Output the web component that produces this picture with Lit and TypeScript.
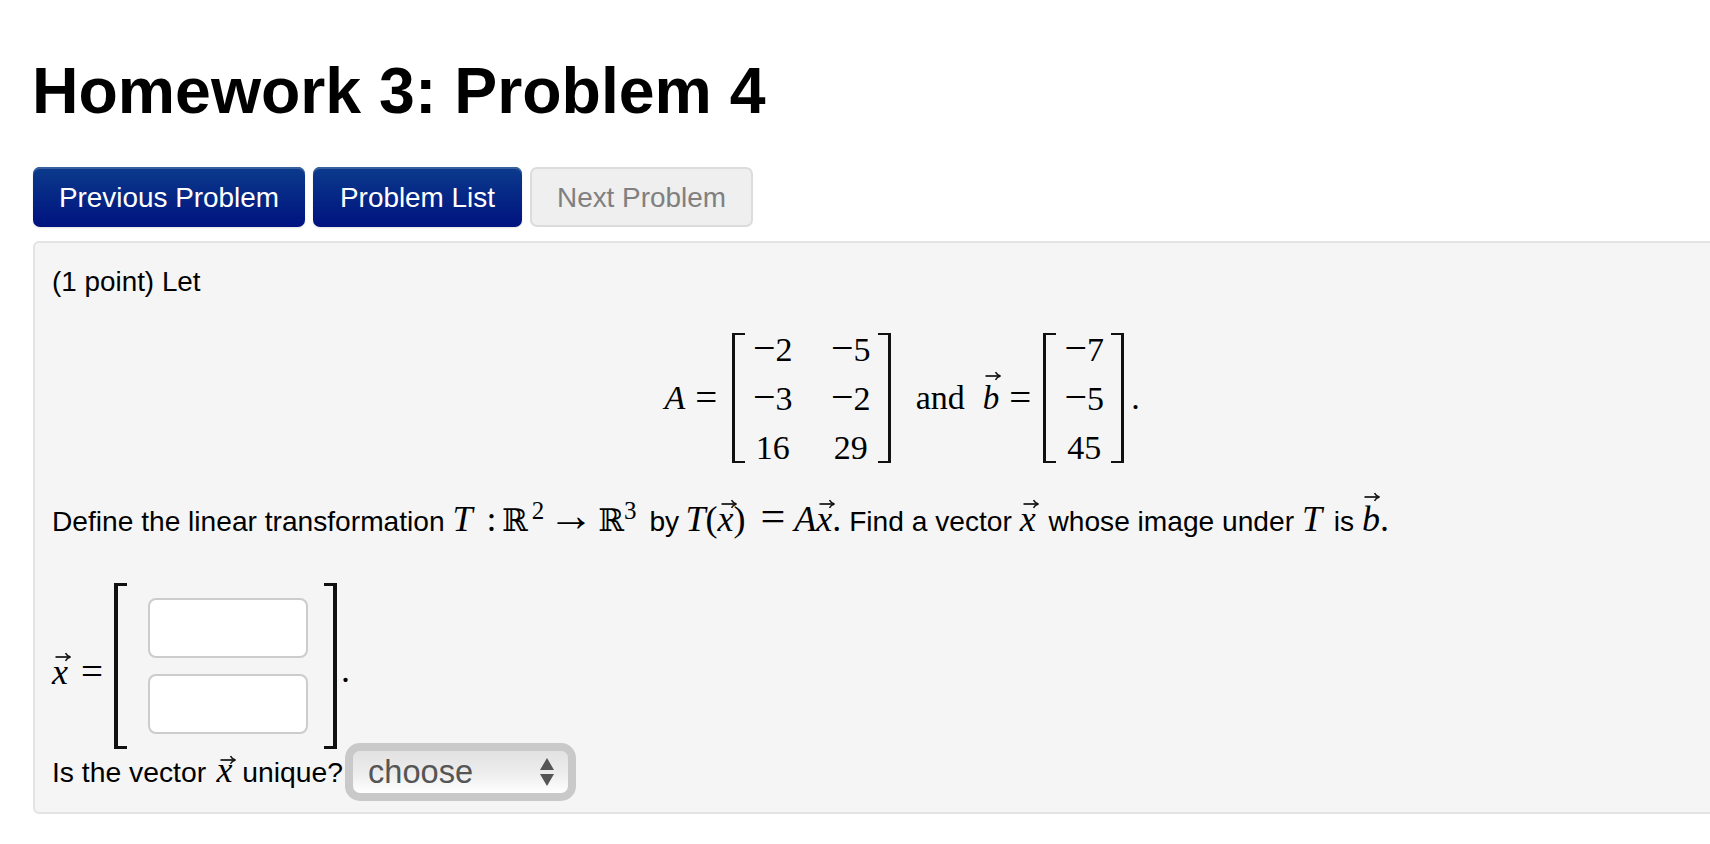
import { LitElement, html, css, svg } from "lit";
import { customElement } from "lit/decorators.js";

const arrow = html`<svg class="arrow" viewBox="0 0 16 10" aria-hidden="true">${svg`<path d="M0.5 5H14.5" stroke="#111" stroke-width="1.7" fill="none"/><path d="M10.5 1.2C11.4 3 13 4.4 15.5 5C13 5.6 11.4 7 10.5 8.8" stroke="#111" stroke-width="1.5" fill="none"/>`}</svg>`;

const vec = (letter: string) => html`<span class="vec ${letter}"><i>${letter}</i>${arrow}</span>`;

const cell = (c: string) =>
  c.startsWith("−")
    ? html`<span class="cell"><span class="minus">−</span>${c.slice(1)}</span>`
    : html`<span class="cell">${c}</span>`;

const matrix = (cols: number, cells: string[]) => html`<span class="matrix">
  <span class="br left"></span>
  <span class="cells" style="grid-template-columns: repeat(${cols}, 40px)">${cells.map(cell)}</span>
  <span class="br right"></span>
</span>`;

@customElement("app-root")
export class AppRoot extends LitElement {
  static styles = css`
    :host {
      display: block;
      width: 1710px;
      height: 844px;
      overflow: hidden;
      background: #fff;
      color: #000;
      font-family: "Liberation Sans", Arial, sans-serif;
      font-size: 27.7px;
      box-sizing: border-box;
      padding: 55px 0 0 33px;
    }
    h1 {
      margin: 0 0 40px -1px;
      font-size: 64.4px;
      line-height: 72px;
      font-weight: 700;
    }
    .nav {
      display: flex;
      gap: 8px;
      height: 60px;
      margin-bottom: 14px;
      font-size: 27.9px;
    }
    .btn {
      display: flex;
      align-items: center;
      justify-content: center;
      box-sizing: border-box;
      height: 60px;
      padding-top: 1px;
      border-radius: 7px;
      color: #fff;
      background: linear-gradient(#0b3b8c, #00127f);
      box-shadow: inset 0 2px 0 #3a5f9f, 0 1px 2px rgba(0, 0, 0, 0.12);
    }
    .prev { width: 272px; }
    .list { width: 209px; }
    .next {
      width: 223px;
      color: #808080;
      background: #efefef;
      border: 2px solid #dcdcdc;
      box-shadow: none;
    }
    .panel {
      box-sizing: border-box;
      width: 1734px;
      height: 573px;
      padding: 19px 17px 0;
      background: #f5f5f5;
      border: 2px solid #e3e3e3;
      border-radius: 6px;
    }
    .line { line-height: 40px; font-size: 27.85px; }
    .display {
      display: flex;
      align-items: center;
      justify-content: center;
      height: 130px;
      margin-top: 31px;
      padding-left: 4.4px;
      font-family: "Liberation Serif", "Times New Roman", serif;
      font-size: 34px;
    }
    .display .vec { font-size: 33px; }
    .eq { margin: 0 12px 0 10px; font-size: 39px; line-height: 0; }
    .display .eq.first { margin-right: 14.4px; }
    .and { margin: 0 18px 0 25px; }
    .dot { margin-left: 7px; }
    i { font-style: italic; }
    .matrix {
      display: flex;
      align-items: center;
      height: 130px;
    }
    .br {
      box-sizing: border-box;
      width: 13px;
      align-self: stretch;
      border-top: 2px solid #111;
      border-bottom: 2px solid #111;
    }
    .br.left { border-left: 3px solid #111; }
    .br.right { border-right: 3px solid #111; }
    .cells {
      display: grid;
      column-gap: 38px;
      margin: 0 7px 0 8px;
    }
    .cell {
      line-height: 49px;
      text-align: center;
      white-space: nowrap;
    }
    .minus { font-size: 40px; line-height: 0; }
    .define { margin-top: 39px; font-size: 28.15px; white-space: pre; }
    .m, .t, .bb, sup {
      line-height: 0;
    }
    .m {
      font-family: "Liberation Serif", "Times New Roman", serif;
      font-size: 36px;
    }
    .big { font-size: 44px; margin: 0 9px 0 15px; }
    .t {
      font-family: "Liberation Serif", "Times New Roman", serif;
      font-size: 36px;
      font-style: italic;
    }
    .t.wide { margin-right: 4px; }
    .bb {
      font-family: "DejaVu Serif", serif;
      font-size: 31px;
    }
    sup {
      font-family: "Liberation Serif", serif;
      font-size: 25px;
      vertical-align: 12px;
    }
    .sq { margin-left: 4px; }
    .colon { margin: 0 5.6px 0 14px; }
    .to { margin: 0 4px; font-size: 46px; }
    .by { margin: 0 -1.5px 0 5px; }
    .gap { margin-right: 5px; }
    .vec {
      position: relative;
      display: inline-block;
      font-family: "Liberation Serif", "Times New Roman", serif;
      font-size: 36px;
      line-height: 0;
    }
    .arrow {
      position: absolute;
      left: 3px;
      top: -20px;
      width: 16px;
      height: 10px;
    }
    .vec.b .arrow { top: -27px; left: 2px; }
    .answer {
      display: flex;
      align-items: center;
      height: 166px;
      margin-top: 41px;
      font-family: "Liberation Serif", serif;
      font-size: 36px;
    }
    .answer .vec, .answer .eq { margin-top: 12px; }
    .answer .eq { margin-left: 13px; margin-right: 11px; }
    .answer .matrix { height: 166px; }
    .answer .br { border-top-width: 3px; border-bottom-width: 3px; }
    .answer .br.left { border-left-width: 4px; }
    .answer .br.right { border-right-width: 4px; }
    .inputs {
      display: flex;
      flex-direction: column;
      gap: 16px;
      margin: 0 16px 0 21px;
    }
    .input {
      box-sizing: border-box;
      width: 160px;
      height: 60px;
      background: #fff;
      border: 2px solid #ccc;
      border-radius: 8px;
    }
    .answer .dot { margin-left: 4px; margin-top: 8px; }
    .unique {
      display: flex;
      align-items: center;
      height: 58px;
      margin-top: -6px;
      white-space: pre;
      font-size: 28.3px;
    }
    .unique .vec { margin: 0 2px 0 2.5px; }
    .unique .vec .arrow { top: -15px; }
    .select {
      box-sizing: border-box;
      display: flex;
      align-items: center;
      justify-content: space-between;
      width: 231px;
      height: 58px;
      margin-left: 2px;
      padding: 0 13px 0 15px;
      border: 8px solid #c9c9c9;
      border-radius: 15px;
      font-size: 32.6px;
      color: #555;
      background: linear-gradient(#e2e2e2, #ececec 50%, #fff);
      background-clip: padding-box;
    }
    .carets { display: block; width: 16px; height: 30px; }
  `;

  render() {
    return html`
      <h1>Homework 3: Problem 4</h1>
      <div class="nav">
        <div class="btn prev">Previous Problem</div>
        <div class="btn list">Problem List</div>
        <div class="btn next">Next Problem</div>
      </div>
      <div class="panel">
        <div class="line">(1 point) Let</div>
        <div class="display">
          <i>A</i><span class="eq first">=</span>
          ${matrix(2, ["−2", "−5", "−3", "−2", "16", "29"])}
          <span class="and">and</span>${vec("b")}<span class="eq">=</span>
          ${matrix(1, ["−7", "−5", "45"])}
          <span class="dot">.</span>
        </div>
        <div class="line define">Define the linear transformation <span class="t">T</span><span class="m colon">:</span><span class="bb">ℝ</span><sup class="sq">2</sup><span class="m to">→</span><span class="bb">ℝ</span><sup>3</sup> <span class="by">by</span> <span class="m"><i>T</i>(</span>${vec("x")}<span class="m">)<span class="big">=</span><i>A</i></span>${vec("x")}<span class="m">.</span> Find a vector <span class="gap">${vec("x")}</span> whose image under <span class="t wide">T</span> is ${vec("b")}<span class="m">.</span></div>
        <div class="answer">
          ${vec("x")}<span class="eq">=</span>
          <span class="matrix">
            <span class="br left"></span>
            <span class="inputs"><span class="input"></span><span class="input"></span></span>
            <span class="br right"></span>
          </span>
          <span class="dot">.</span>
        </div>
        <div class="unique"><span>Is the vector ${vec("x")} unique?</span><div class="select"><span>choose</span>
          <svg class="carets" viewBox="0 0 16 30">${svg`<path d="M8 1L15 13H1Z M1 17H15L8 29Z" fill="#555"/>`}</svg></div></div>
      </div>
    `;
  }
}
